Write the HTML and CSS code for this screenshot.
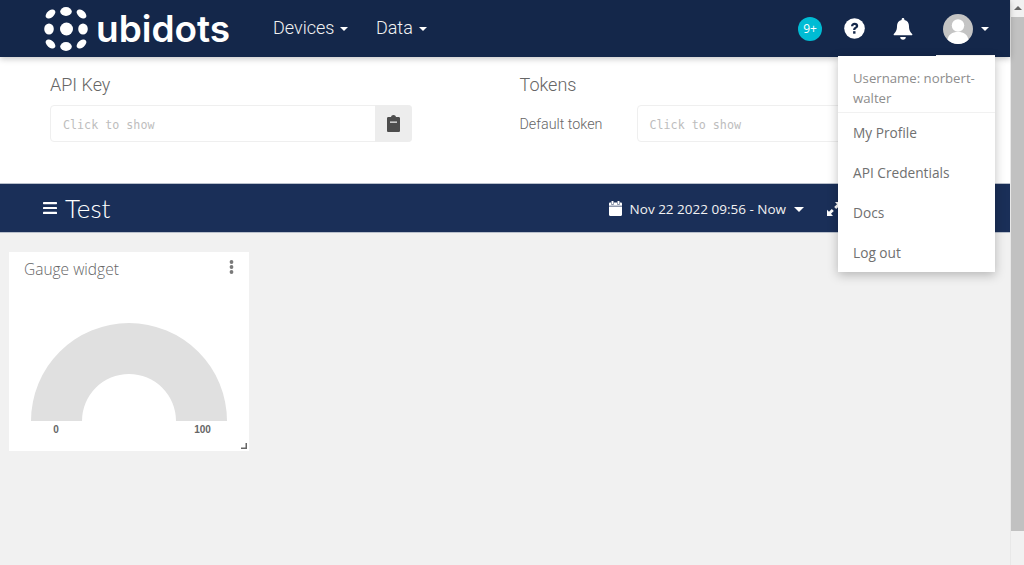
FILE: index.html
```html
<!DOCTYPE html>
<html lang="en">
<head>
<meta charset="utf-8">
<title>Ubidots</title>
<link rel="stylesheet" href="styles.css">
</head>
<body>
<div class="window">
  <div class="page">
    <header class="navbar">
      <div class="logo">
        <svg class="logo-mark" width="44" height="44" viewBox="0 0 44 44" fill="#fff">
          <ellipse cx="6.500" cy="7" rx="5.600" ry="3.500" transform="rotate(-40 6.500 7)"/>
          <ellipse cx="22" cy="4.500" rx="5.800" ry="4.400"/>
          <ellipse cx="37.500" cy="7" rx="5.600" ry="3.500" transform="rotate(40 37.500 7)"/>
          <ellipse cx="5" cy="22" rx="4.800" ry="5.600"/>
          <circle cx="22.500" cy="22" r="6.500"/>
          <ellipse cx="39" cy="22" rx="4.800" ry="5.600"/>
          <ellipse cx="6.500" cy="37" rx="5.600" ry="3.500" transform="rotate(40 6.500 37)"/>
          <ellipse cx="22" cy="39.500" rx="5.800" ry="4.400"/>
          <ellipse cx="37.500" cy="37" rx="5.600" ry="3.500" transform="rotate(-40 37.500 37)"/>
        </svg>
        <span class="logo-text">ubidots</span>
      </div>
      <nav class="nav-links">
        <span class="nav-link">Devices <i class="caret"></i></span>
        <span class="nav-link">Data <i class="caret"></i></span>
      </nav>
      <div class="nav-tools">
        <span class="badge">9+</span>
        <svg class="tool-help" width="21" height="21" viewBox="0 0 21 21">
          <circle cx="10.500" cy="10.500" r="10.300" fill="#fff"/>
          <path d="M7 8.200c0-2.200 1.600-3.400 3.600-3.400 2.100 0 3.600 1.200 3.600 3 0 1.400-.8 2.100-1.800 2.700-.8.500-1 .8-1 1.600H9.100c0-1.500.4-2.200 1.500-2.900.8-.5 1.200-.8 1.200-1.300 0-.6-.5-1-1.200-1-.8 0-1.200.5-1.300 1.300z" fill="#14274a"/>
          <rect x="9.100" y="13.200" width="2.400" height="2.500" fill="#14274a"/>
        </svg>
        <svg class="tool-bell" width="20" height="22" viewBox="0 0 20 22" fill="#fff">
          <path d="M10 0c.9 0 1.400.6 1.400 1.500v.6c3 .6 4.600 3 4.600 6 0 4.400 1.300 5.800 3.200 7.900.4.500.1 1.300-.6 1.300H1.400c-.7 0-1-.8-.6-1.300C2.700 13.900 4 12.500 4 8.100c0-3 1.600-5.400 4.600-6v-.6C8.600.6 9.100 0 10 0z"/>
          <path d="M7.200 19h5.600c0 1.700-1.200 2.800-2.800 2.800S7.200 20.700 7.200 19z"/>
        </svg>
        <span class="user">
          <svg class="avatar" width="30" height="30" viewBox="0 0 30 30">
            <circle cx="15" cy="15" r="15" fill="#c4c4c4"/>
            <circle cx="15" cy="11.500" r="6.200" fill="#fff"/>
            <path d="M4.500 25.800c1-5.300 4.500-7.800 10.500-7.800s9.500 2.500 10.500 7.800A15 15 0 0 1 15 30a15 15 0 0 1-10.500-4.200z" fill="#fff"/>
          </svg>
          <i class="caret caret-small"></i>
        </span>
      </div>
    </header>

    <section class="keys">
      <div class="key-col key-api">
        <h2 class="key-title">API Key</h2>
        <div class="field">
          <span class="field-text">Click to show</span>
          <span class="field-btn">
            <svg width="13" height="17" viewBox="0 0 13 17" fill="#4d4d4d">
              <path d="M1.300 2H4c.2-1.200 1.200-2 2.500-2S8.800.8 9 2h2.700c.7 0 1.300.6 1.300 1.300v12.400c0 .7-.6 1.300-1.300 1.300H1.300C.6 17 0 16.400 0 15.700V3.300C0 2.600.6 2 1.300 2z"/>
              <rect x="3" y="6.500" width="7" height="1.300" fill="#e9e9e9"/>
            </svg>
          </span>
        </div>
      </div>
      <div class="key-col key-token">
        <h2 class="key-title">Tokens</h2>
        <div class="token-row">
          <span class="token-label">Default token</span>
          <div class="field field-token">
            <span class="field-text">Click to show</span>
          </div>
        </div>
      </div>
    </section>

    <section class="dash-bar">
      <div class="dash-title">
        <svg width="14" height="12" viewBox="0 0 14 12" fill="#fff">
          <rect width="14" height="2.200" rx=".6"/>
          <rect y="4.900" width="14" height="2.200" rx=".6"/>
          <rect y="9.800" width="14" height="2.200" rx=".6"/>
        </svg>
        <span>Test</span>
      </div>
      <div class="dash-tools">
        <svg width="13" height="15" viewBox="0 0 13 15" fill="#fff">
          <rect x="2.500" width="2" height="3" rx=".6"/>
          <rect x="8.500" width="2" height="3" rx=".6"/>
          <path d="M1.200 1.600h1v1.800h2.600V1.600h3.400v1.800h2.600V1.600h1c.7 0 1.200.5 1.200 1.200V4.700H0V2.800c0-.7.5-1.200 1.200-1.200z"/>
          <path d="M0 5.500h13v8.300c0 .7-.5 1.200-1.200 1.200H1.200C.5 15 0 14.500 0 13.800z"/>
        </svg>
        <span class="date-range">Nov 22 2022 09:56 - Now</span>
        <i class="caret caret-date"></i>
        <svg class="expand" width="14" height="14" viewBox="0 0 14 14" fill="#fff">
          <path d="M0 14V7.800l2 2 2.800-2.800 2 2L4 11.800l2 2.200z"/>
          <path d="M14 0v6.200l-2-2-2.800 2.800-2-2L10 2.200 8 0z"/>
        </svg>
      </div>
    </section>

    <main class="canvas">
      <article class="widget">
        <div class="widget-head">
          <span class="widget-title">Gauge widget</span>
          <svg width="5" height="14" viewBox="0 0 5 14" fill="#7a7a7a">
            <circle cx="2.500" cy="2" r="1.900"/>
            <circle cx="2.500" cy="7" r="1.900"/>
            <circle cx="2.500" cy="12" r="1.900"/>
          </svg>
        </div>
        <svg class="gauge" width="240" height="146" viewBox="0 0 240 146">
          <path d="M22 116a98 98 0 0 1 196 0h-51a47 47 0 0 0-94 0z" fill="#e0e0e0"/>
          <text class="gauge-label" x="47" y="128" text-anchor="middle">0</text>
          <text class="gauge-label" x="193.500" y="128" text-anchor="middle">100</text>
        </svg>
        <svg class="resize" width="6" height="6" viewBox="0 0 6 6">
          <path d="M4.500 0H6v6H0V4.500h4.500z" fill="#666"/>
        </svg>
      </article>
    </main>

    <div class="menu-tab"></div>
    <div class="menu">
      <div class="menu-head">Username: norbert-walter</div>
      <div class="menu-item">My Profile</div>
      <div class="menu-item">API Credentials</div>
      <div class="menu-item">Docs</div>
      <div class="menu-item">Log out</div>
    </div>
  </div>
  <div class="scrollbar">
    <div class="scroll-arrow"><i></i></div>
    <div class="scroll-thumb"></div>
  </div>
</div>
</body>
</html>
```

FILE: styles.css
```css
* { box-sizing: border-box; }
html, body { margin: 0; height: 100%; overflow: hidden; }
body { font-family: "Open Sans", sans-serif; background: #f1f1f1; }

.window { display: flex; width: 1024px; height: 565px; }
.page { position: relative; flex: 1; min-width: 0; display: flex; flex-direction: column; background: #f1f1f1; }

.scrollbar { width: 14px; background: #f1f1f1; border-left: 1px solid #e8e8e8; display: flex; flex-direction: column; }
.scroll-arrow { height: 17px; display: flex; justify-content: center; padding-top: 6px; }
.scroll-arrow i { width: 0; height: 0; border-left: 4px solid transparent; border-right: 4px solid transparent; border-bottom: 4px solid #666; }
.scroll-thumb { height: 514px; background: #c1c1c1; }

.navbar { height: 57px; flex: none; display: flex; align-items: center; background: #14274a; color: #fff; padding-left: 44px; box-shadow: 0 2px 6px rgba(0,0,0,.22); position: relative; z-index: 2; }
.logo { display: flex; align-items: center; gap: 8px; }
.logo-mark { display: block; }
.logo-text { font-family: "Inter", sans-serif; font-weight: 600; font-size: 37px; line-height: 44px; width: 135px; white-space: nowrap; }
.nav-links { display: flex; gap: 27.500px; margin: -3px 0 0 42px; font-family: "Roboto", sans-serif; font-weight: 300; font-size: 18px; }
.nav-link { display: inline-flex; align-items: center; gap: 6px; color: #f2f2f2; }
.caret { display: inline-block; width: 0; height: 0; border-left: 4px solid transparent; border-right: 4px solid transparent; border-top: 4px solid #fff; margin-top: 3px; }
.nav-tools { margin-left: auto; display: flex; align-items: center; padding-right: 21px; }
.badge { width: 24px; height: 24px; border-radius: 50%; background: #00bcd4; color: #fff; font-size: 12px; display: flex; align-items: center; justify-content: center; }
.tool-help { margin-left: 22px; }
.tool-bell { margin-left: 28px; }
.user { display: flex; align-items: center; gap: 8px; margin-left: 30px; }
.caret-small { margin-top: 0; }

.keys { height: 126px; flex: none; background: #fff; display: flex; padding: 17px 0 0 50px; }
.key-col { display: flex; flex-direction: column; }
.key-api { width: 469.500px; }
.key-title { margin: 0 0 9px; font-family: "Roboto", sans-serif; font-weight: 300; font-size: 18px; line-height: 22px; color: #666; }
.field { width: 362px; height: 37px; display: flex; align-items: center; border: 1px solid #efefef; border-radius: 4px; padding: 2px 0 0 12px; background: #fff; position: relative; }
.field-text { font-family: "DejaVu Sans Mono", monospace; font-size: 11.700px; color: #bdbdbd; }
.field-btn { position: absolute; right: -1px; top: -1px; width: 37px; height: 37px; background: #ededed; border-radius: 0 4px 4px 0; display: flex; align-items: center; justify-content: center; }
.token-row { display: flex; align-items: center; gap: 34px; }
.token-label { font-family: "Roboto", sans-serif; font-weight: 300; font-size: 14.300px; line-height: 20px; color: #666; width: 83px; white-space: nowrap; }
.field-token { width: 260px; }

.dash-bar { height: 50px; flex: none; display: flex; align-items: center; background: #1a2f58; color: #fff; border-top: 1px solid #b9c0cc; border-bottom: 1px solid #b9c0cc; padding-left: 43px; }
.dash-title { display: flex; align-items: center; gap: 8px; font-family: "Lato", sans-serif; font-weight: 300; font-size: 26px; }
.dash-tools { margin-left: auto; display: flex; align-items: center; padding: 1px 169px 0 0; font-size: 13.500px; }
.date-range { margin-left: 8px; color: #f2f2f2; }
.caret-date { margin-left: 8px; margin-top: 1px; border-left-width: 5px; border-right-width: 5px; border-top-width: 5px; }
.expand { margin-left: 23px; }

.canvas { flex: 1; padding: 19px 9px; background: #f1f1f1; }
.widget { position: relative; width: 240px; height: 199px; background: #fff; }
.widget-head { height: 53px; display: flex; justify-content: space-between; align-items: flex-start; padding: 8px 15px 0 15px; }
.widget-title { font-family: "Open Sans", sans-serif; font-weight: 300; font-size: 15.500px; line-height: 18px; color: #666; }
.gauge { display: block; }
.gauge-label { font-family: "Liberation Sans", sans-serif; font-size: 10px; font-weight: 700; fill: #666; }
.resize { position: absolute; right: 2px; bottom: 2px; }

.menu-tab { position: absolute; left: 936px; top: 55px; width: 59px; height: 2px; background: #fff; z-index: 3; }
.menu { position: absolute; left: 838px; top: 56px; width: 157px; height: 216px; background: #fff; box-shadow: 0 3px 10px rgba(0,0,0,.25); z-index: 3; font-size: 13.700px; color: #707070; }
.menu-head { height: 57px; padding: 12px 15px 0; line-height: 20px; color: #8d8d8d; border-bottom: 1px solid #f1f1f1; font-size: 13.200px; }
.menu-item { height: 40px; line-height: 40px; padding-left: 15px; }
```
